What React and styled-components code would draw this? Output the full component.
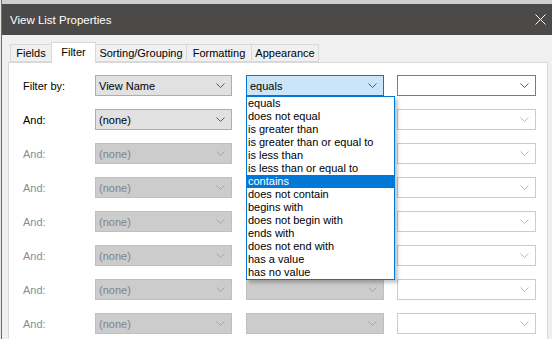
import React from "react";
import styled, { createGlobalStyle } from "styled-components";

const Global = createGlobalStyle`
  html, body { margin: 0; padding: 0; overflow: hidden; background: #f0f0f0; }
  body { font-family: "Liberation Sans", Arial, sans-serif; font-size: 11px; }
`;

const Screen = styled.div`
  width: 552px;
  height: 339px;
  display: flex;
  overflow: hidden;
  background: #f0f0f0;
`;

const Edge = styled.div`
  width: 2px;
  flex: none;
  background: linear-gradient(to right, #e6e6e6 0 1px, #6e6e6e 1px 2px);
`;

const Window = styled.div`
  flex: 1;
  display: flex;
  flex-direction: column;
  min-width: 0;
`;

const TopStrip = styled.div`
  height: 4px;
  flex: none;
  background: #cfcfcf;
`;

const TitleBar = styled.div`
  height: 31px;
  flex: none;
  background: #4b4a48;
  color: #ffffff;
  display: flex;
  align-items: center;
  justify-content: space-between;
  padding: 0 6px 0 8px;
  font-size: 11.5px;
`;

const Title = styled.span`
  margin-top: 1px;
`;

const Body = styled.div`
  flex: 1;
  padding: 6px 4px 0 6px;
  display: flex;
  flex-direction: column;
  min-width: 0;
`;

const TabStrip = styled.div`
  display: flex;
  align-items: flex-end;
  height: 21px;
  padding-left: 2px;
  position: relative;
  z-index: 1;
`;

const Tab = styled.div`
  box-sizing: border-box;
  width: ${(p) => p.$w}px;
  height: ${(p) => (p.$active ? 21 : 18)}px;
  margin-bottom: ${(p) => (p.$active ? -1 : 0)}px;
  margin-left: ${(p) => (p.$overlap ? -1 : 0)}px;
  background: ${(p) => (p.$active ? "#ffffff" : "#f0f0f0")};
  border: 1px solid #d9d9d9;
  border-bottom: ${(p) => (p.$active ? "none" : "1px solid #d9d9d9")};
  display: flex;
  align-items: ${(p) => (p.$active ? "flex-start" : "center")};
  padding-top: ${(p) => (p.$active ? 3 : 0)}px;
  justify-content: center;
  color: #000;
  white-space: nowrap;
`;

const Panel = styled.div`
  flex: 1;
  background: #ffffff;
  border: 1px solid #d9d9d9;
  border-bottom: none;
  padding: 12px 0 0 14px;
`;

const Grid = styled.div`
  display: grid;
  grid-template-columns: 58px 137px 138px 138px;
  column-gap: 14px;
  row-gap: 13px;
  grid-auto-rows: 21px;
  & > :nth-child(4n) { margin-left: -1px; }
`;

const Label = styled.div`
  display: flex;
  align-items: center;
  color: ${(p) => (p.$disabled ? "#8d8d8d" : "#000000")};
`;

const variants = {
  normal: { bg: "#e1e1e1", border: "#adadad", color: "#000", chev: "#5a5a5a" },
  active: { bg: "#cce4f7", border: "#0078d7", color: "#000", chev: "#5a5a5a" },
  white: { bg: "#ffffff", border: "#7a7a7a", color: "#000", chev: "#5a5a5a" },
  disabled: { bg: "#cccccc", border: "#bfbfbf", color: "#838383", chev: "#a6a6a6" },
  disabledWhite: { bg: "#ffffff", border: "#cccccc", color: "#838383", chev: "#bcbcbc" },
};

const Cell = styled.div`
  position: relative;
`;

const SelectBox = styled.div`
  box-sizing: border-box;
  height: 21px;
  width: 100%;
  display: flex;
  align-items: center;
  justify-content: space-between;
  padding: 0 6px 0 3px;
  background: ${(p) => variants[p.$v].bg};
  border: 1px solid ${(p) => variants[p.$v].border};
  color: ${(p) => variants[p.$v].color};
  white-space: nowrap;
`;

const Chevron = ({ color }) => (
  <svg width="9" height="6" viewBox="0 0 9 6" style={{ flex: "none" }}>
    <polyline points="0.5,0.5 4.5,4.5 8.5,0.5" fill="none" stroke={color} strokeWidth="1" />
  </svg>
);

const Select = ({ v = "normal", value = "" }) => (
  <SelectBox $v={v}>
    <span>{value}</span>
    <Chevron color={variants[v].chev} />
  </SelectBox>
);

const ListBox = styled.div`
  position: absolute;
  top: 21px;
  left: 0;
  width: 149px;
  box-sizing: border-box;
  background: #ffffff;
  border: 1px solid #0078d7;
  box-shadow: 3px 3px 3px rgba(0, 0, 0, 0.22);
  z-index: 5;
`;

const Item = styled.div`
  height: 13px;
  line-height: 13px;
  padding-left: 1px;
  white-space: nowrap;
  background: ${(p) => (p.$sel ? "#0078d7" : "transparent")};
  color: ${(p) => (p.$sel ? "#ffffff" : "#000000")};
`;

const options = [
  "equals",
  "does not equal",
  "is greater than",
  "is greater than or equal to",
  "is less than",
  "is less than or equal to",
  "contains",
  "does not contain",
  "begins with",
  "does not begin with",
  "ends with",
  "does not end with",
  "has a value",
  "has no value",
];

const CloseIcon = () => (
  <svg width="11" height="11" viewBox="0 0 11 11">
    <path d="M0.5 0.5 L10.5 10.5 M10.5 0.5 L0.5 10.5" stroke="#ffffff" strokeWidth="1" />
  </svg>
);

export default function App() {
  const rows = [];
  for (let i = 0; i < 6; i++) {
    rows.push(
      <React.Fragment key={i}>
        <Label $disabled>And:</Label>
        <Cell><Select v="disabled" value="(none)" /></Cell>
        <Cell><Select v="disabled" /></Cell>
        <Cell><Select v="disabledWhite" /></Cell>
      </React.Fragment>
    );
  }
  return (
    <>
      <Global />
      <Screen>
        <Edge />
        <Window>
          <TopStrip />
          <TitleBar>
            <Title>View List Properties</Title>
            <CloseIcon />
          </TitleBar>
          <Body>
            <TabStrip>
              <Tab $w={42}>Fields</Tab>
              <Tab $w={45} $active $overlap>Filter</Tab>
              <Tab $w={92} $overlap>Sorting/Grouping</Tab>
              <Tab $w={66} $overlap>Formatting</Tab>
              <Tab $w={68} $overlap>Appearance</Tab>
            </TabStrip>
            <Panel>
              <Grid>
                <Label>Filter by:</Label>
                <Cell><Select v="normal" value="View Name" /></Cell>
                <Cell>
                  <Select v="active" value="equals" />
                  <ListBox>
                    {options.map((o) => (
                      <Item key={o} $sel={o === "contains"}>{o}</Item>
                    ))}
                  </ListBox>
                </Cell>
                <Cell><Select v="white" /></Cell>

                <Label>And:</Label>
                <Cell><Select v="normal" value="(none)" /></Cell>
                <Cell><Select v="disabled" /></Cell>
                <Cell><Select v="disabledWhite" /></Cell>

                {rows}
              </Grid>
            </Panel>
          </Body>
        </Window>
      </Screen>
    </>
  );
}
